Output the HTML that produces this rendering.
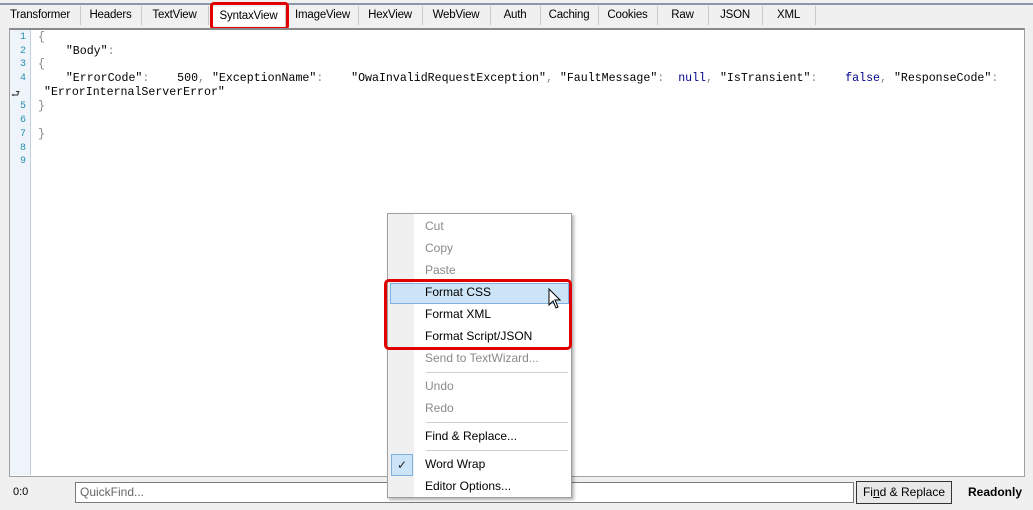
<!DOCTYPE html><html><head><style>
body{margin:0;width:1033px;height:510px;background:#f0f0f0;font-family:"Liberation Sans",sans-serif;position:relative;overflow:hidden}
.a{position:absolute}
.tab{position:absolute;top:6px;height:19px;font-size:11.5px;line-height:19px;text-align:center;border-right:1px solid #c8c8c8;color:#000;letter-spacing:-0.2px}
.code{font-family:"Liberation Mono",monospace;font-size:11.6px;color:#000;white-space:pre;position:absolute;left:38px}
.ln{position:absolute;left:14px;width:12px;text-align:right;font-family:"Liberation Mono",monospace;font-size:10px;color:#2b91af}
.mi{position:absolute;left:37px;font-size:12px;color:#000}
.dis{color:#8a8a8a}
.sep{position:absolute;left:38px;right:3px;height:1px;background:#d0d0d0}
</style></head><body>
<div class="a" style="left:0;top:3px;width:1033px;height:2px;background:#8a96a6"></div>
<div class="tab" style="left:0;width:80px">Transformer</div>
<div class="tab" style="left:80px;width:61px">Headers</div>
<div class="tab" style="left:141px;width:67px">TextView</div>
<div class="tab" style="left:212px;width:73px;background:#fff;top:7px">SyntaxView</div>
<div class="tab" style="left:287px;width:71px">ImageView</div>
<div class="tab" style="left:358px;width:64px">HexView</div>
<div class="tab" style="left:422px;width:68px">WebView</div>
<div class="tab" style="left:490px;width:50px">Auth</div>
<div class="tab" style="left:540px;width:58px">Caching</div>
<div class="tab" style="left:598px;width:59px">Cookies</div>
<div class="tab" style="left:657px;width:51px">Raw</div>
<div class="tab" style="left:708px;width:54px">JSON</div>
<div class="tab" style="left:762px;width:53px">XML</div>
<div class="a" style="left:210px;top:2px;width:73px;height:22px;border:3px solid #e00000;border-radius:4px"></div>
<div class="a" style="left:9px;top:28px;width:1014px;height:446px;background:#fff;border:1px solid #a0a0a0;border-top:2px solid #8a8a8a"></div>
<div class="a" style="left:10px;top:30px;width:20px;height:445px;background:#eef4fa;border-right:1px solid #c0d0e0"></div>
<div class="ln" style="top:32px">1</div><div class="ln" style="top:46px">2</div><div class="ln" style="top:59px">3</div><div class="ln" style="top:73px">4</div>
<div class="a" style="left:11px;top:87px;font-size:10px;color:#333">⮐</div>
<div class="ln" style="top:101px">5</div><div class="ln" style="top:115px">6</div><div class="ln" style="top:129px">7</div><div class="ln" style="top:143px">8</div><div class="ln" style="top:156px">9</div>
<div class="code" style="top:31px;color:#888">{</div>
<div class="code" style="top:45px">    "Body"<span style="color:#888">:</span></div>
<div class="code" style="top:58px;color:#888">{</div>
<div class="code" style="top:72px">    "ErrorCode"<span style="color:#888">:</span>    500<span style="color:#888">,</span> "ExceptionName"<span style="color:#888">:</span>    "OwaInvalidRequestException"<span style="color:#888">,</span> "FaultMessage"<span style="color:#888">:</span>  <span style="color:#00008b">null</span><span style="color:#888">,</span> "IsTransient"<span style="color:#888">:</span>    <span style="color:#00008b">false</span><span style="color:#888">,</span> "ResponseCode"<span style="color:#888">:</span></div>
<div class="code" style="top:86px;left:44px">"ErrorInternalServerError"</div>
<div class="code" style="top:100px;color:#888">}</div>
<div class="code" style="top:128px;color:#888">}</div>
<div class="a" style="left:13px;top:486px;font-size:11px">0:0</div>
<div class="a" style="left:75px;top:482px;width:773px;height:19px;background:#fff;border:1px solid #7a7a7a;font-size:12px;line-height:19px;color:#666;padding-left:4px">QuickFind...</div>
<div class="a" style="left:856px;top:481px;width:94px;height:21px;border:1px solid #333;background:#e8e8e8;font-size:12px;line-height:21px;text-align:center">Fi<u>n</u>d &amp; Replace</div>
<div class="a" style="left:968px;top:485px;font-size:12px;font-weight:bold">Readonly</div>
<div class="a" style="left:387px;top:213px;width:183px;height:283px;background:#fff;border:1px solid #a0a0a0;box-shadow:2px 2px 3px rgba(0,0,0,.3)">
<div class="a" style="left:0;top:0;width:26px;height:283px;background:#f0f0f0"></div>
<div class="a" style="left:2px;top:69px;width:177px;height:19px;background:#cce4f7;border:1px solid #7fb0e0"></div>
<div class="mi dis" style="top:5px">Cut</div>
<div class="mi dis" style="top:27px">Copy</div>
<div class="mi dis" style="top:49px">Paste</div>
<div class="mi" style="top:71px">Format CSS</div>
<div class="mi" style="top:93px">Format XML</div>
<div class="mi" style="top:115px">Format Script/JSON</div>
<div class="mi dis" style="top:137px">Send to TextWizard...</div>
<div class="sep" style="top:158px"></div>
<div class="mi dis" style="top:165px">Undo</div>
<div class="mi dis" style="top:187px">Redo</div>
<div class="sep" style="top:208px"></div>
<div class="mi" style="top:215px">Find &amp; Replace...</div>
<div class="sep" style="top:236px"></div>
<div class="a" style="left:3px;top:240px;width:20px;height:20px;background:#cce4f7;border:1px solid #7fb0e0;font-size:12px;text-align:center;line-height:20px;color:#222">✓</div>
<div class="mi" style="top:243px">Word Wrap</div>
<div class="mi" style="top:265px">Editor Options...</div>
</div>
<div class="a" style="left:384px;top:279px;width:182px;height:65px;border:3px solid #e00000;border-radius:5px"></div>
<svg class="a" style="left:548px;top:288px" width="14" height="22" viewBox="0 0 14 22"><path d="M1 1 L1 17 L5 13 L8 20 L10 19 L7 12 L12 12 Z" fill="#fff" stroke="#000" stroke-width="1"/></svg>
</body></html>
